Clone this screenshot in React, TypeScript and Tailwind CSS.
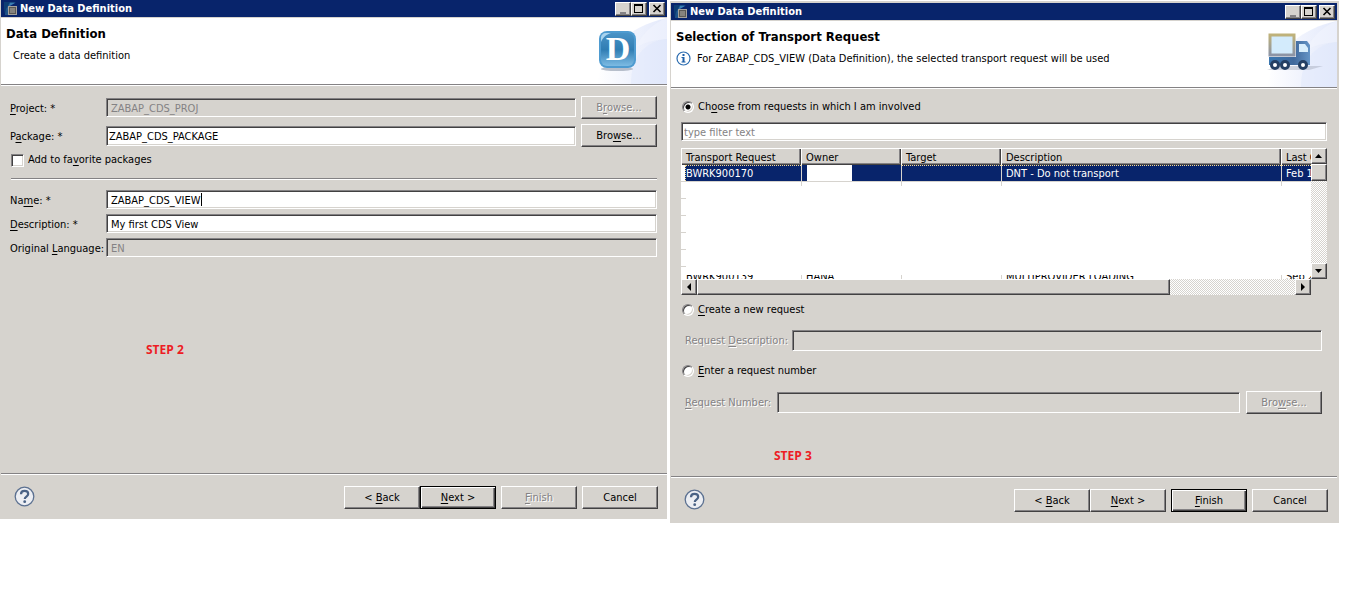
import { useState } from "react";
import type { ReactNode } from "react";

const SUNKEN =
  "border border-t-[#848284] border-l-[#848284] border-b-white border-r-white shadow-[inset_1px_1px_0_#424142,inset_-1px_-1px_0_#d6d3ce]";
const RAISED =
  "border border-t-white border-l-white border-b-[#424142] border-r-[#424142] bg-[#d6d3ce] shadow-[inset_-1px_-1px_0_#848284]";
const DITHER = "bg-[repeating-conic-gradient(#fff_0_25%,#d6d3ce_0_50%)] bg-[length:2px_2px]";
const DISABLED = "text-[#848284] [text-shadow:1px_1px_0_#fff]";
const SELECTED =
  "h-4 border-t border-l border-t-[#f7db94] border-l-[#d6d3ce] [border-top-style:dotted] bg-[#08246b] pl-1 leading-4";

// "&" goes before the letter that is the keyboard mnemonic
function Mnemonic({ text }: { text: string }) {
  const i = text.indexOf("&");
  if (i < 0) return <span>{text}</span>;
  return (
    <span>
      {text.slice(0, i)}
      <span className="underline underline-offset-2">{text[i + 1]}</span>
      {text.slice(i + 2)}
    </span>
  );
}

interface ButtonProps {
  text: string;
  disabled?: boolean;
  primary?: boolean;
}

function PushButton({ text, disabled, primary }: ButtonProps) {
  const frame = primary
    ? "border border-black bg-[#d6d3ce] shadow-[inset_1px_1px_0_#fff,inset_-1px_-1px_0_#424142,inset_-2px_-2px_0_#848284]"
    : RAISED;
  return (
    <button type="button" disabled={disabled} className={`h-[23px] w-[76px] shrink-0 ${frame} ${disabled ? DISABLED : ""}`}>
      <Mnemonic text={text} />
    </button>
  );
}

interface FieldProps {
  id: string;
  value?: string;
  disabled?: boolean;
  caret?: boolean;
  className?: string;
}

function Field({ id, value = "", disabled, caret, className = "h-[19px] pl-1" }: FieldProps) {
  const [text, setText] = useState<string>(value);
  return (
    <div className={`flex min-w-0 flex-1 items-center ${SUNKEN} ${disabled ? "bg-[#d6d3ce]" : "bg-white"} ${className}`}>
      <input
        id={id}
        type="text"
        value={text}
        disabled={disabled}
        onChange={(e) => setText(e.target.value)}
        className={`h-4 bg-transparent pt-0.5 outline-none disabled:text-[#848284] ${caret ? "[field-sizing:content]" : "w-full"}`}
      />
      {caret && <span className="h-[13px] w-px bg-black" />}
    </div>
  );
}

function TitleBar() {
  return (
    <div className="flex h-[17px] items-center bg-[#08246b] pr-0.5 pl-[3px] text-white">
      <svg width="14" height="14" viewBox="0 0 14 14" aria-hidden="true">
        <path d="M0 0h12L5 4v9L1 13z" fill="#1d5288" />
        <path d="M0 0h6L2 7l-1 5z" fill="#0c3d73" />
        <path d="M6 1h5L4 5l-1 4z" fill="#3b7fb5" />
        <rect x="4" y="4" width="9" height="9" fill="#a5a29d" />
        <rect x="5" y="5" width="7" height="7" fill="#5a5955" />
        <rect x="6" y="6" width="5" height="5" fill="#85837e" />
      </svg>
      <span className="ml-0.5 flex-1 font-bold">New Data Definition</span>
      <button type="button" aria-label="Minimize" className={`h-[14px] w-4 ${RAISED}`}>
        <svg width="14" height="12" viewBox="0 0 14 12"><path d="M4 9h6v2H4z" fill="#848284" /></svg>
      </button>
      <button type="button" aria-label="Maximize" className={`h-[14px] w-4 ${RAISED}`}>
        <svg width="14" height="12" viewBox="0 0 14 12"><path d="M2 1h9v9H2zM3 3v6h7V3z" fill="#000" fillRule="evenodd" /></svg>
      </button>
      <button type="button" aria-label="Close" className={`ml-0.5 h-[14px] w-4 ${RAISED}`}>
        <svg width="14" height="12" viewBox="0 0 14 12"><path d="M3.500 2l7 7M10.500 2l-7 7" stroke="#000" strokeWidth="1.600" /></svg>
      </button>
    </div>
  );
}

function Swoosh({ id }: { id: string }) {
  return (
    <>
      <defs>
        <linearGradient id={`${id}-sky`} x1="0" y1="0" x2="1" y2="0">
          <stop offset="0" stopColor="#fff" />
          <stop offset="0.500" stopColor="#f0f3fd" />
          <stop offset="1" stopColor="#e3e9fb" />
        </linearGradient>
      </defs>
      <path d="M0 66C4 36 30 8 70 0V66z" fill={`url(#${id}-sky)`} />
      <path d="M34 66C34 40 46 24 70 21V66z" fill="#dfe7fb" fillOpacity="0.500" />
      <path d="M38 30C46 14 58 4 70 0V21C56 22 46 25 38 30z" fill="#f3f6fe" fillOpacity="0.500" />
    </>
  );
}

function DataDefinitionBanner() {
  return (
    <svg width="70" height="66" viewBox="0 0 70 66" aria-hidden="true">
      <Swoosh id="dd" />
      <defs>
        <linearGradient id="dd-face" x1="0" y1="0" x2="0" y2="1">
          <stop offset="0" stopColor="#4a93c6" />
          <stop offset="0.500" stopColor="#2f7db3" />
          <stop offset="1" stopColor="#7dbbe3" />
        </linearGradient>
      </defs>
      <ellipse cx="20" cy="51" rx="16" ry="2" fill="#8c97a8" fillOpacity="0.600" />
      <rect x="2" y="13" width="37" height="37" rx="8" fill="#4e9bd0" />
      <rect x="4" y="15" width="33" height="33" rx="6" fill="url(#dd-face)" />
      <path d="M4 20c0-3 2-5 5-5h5c-4 1-8 4-10 9z" fill="#a9d4ef" />
      <text x="21" y="42" textAnchor="middle" fontSize="34" fontWeight="bold" fill="#fff" fontFamily="'Liberation Serif', serif">D</text>
    </svg>
  );
}

function TransportBanner() {
  return (
    <svg width="70" height="66" viewBox="0 0 70 66" aria-hidden="true">
      <Swoosh id="tr" />
      <defs>
        <linearGradient id="tr-frame" x1="0" y1="0" x2="0" y2="1">
          <stop offset="0" stopColor="#bfb27a" />
          <stop offset="1" stopColor="#8c94a6" />
        </linearGradient>
        <linearGradient id="tr-body" x1="0" y1="0" x2="1" y2="0">
          <stop offset="0" stopColor="#3b77b0" />
          <stop offset="0.600" stopColor="#41699c" />
          <stop offset="1" stopColor="#6594c6" />
        </linearGradient>
      </defs>
      <path d="M0 49l12-4h44l-14 4z" fill="#aab0c0" fillOpacity="0.500" />
      <rect x="3" y="14" width="24" height="20" fill="#d3ebfc" stroke="url(#tr-frame)" strokeWidth="3" />
      <path d="M2 36h27V20h11l3 4v20H2z" fill="url(#tr-body)" />
      <path d="M32 23h6l3 4v4h-9z" fill="#d9eefc" />
      <g fill="#fff" stroke="#243f63" strokeWidth="3">
        <circle cx="8" cy="44" r="3.500" />
        <circle cx="18" cy="44" r="3.500" />
        <circle cx="36" cy="44" r="3.500" />
      </g>
    </svg>
  );
}

interface DialogProps {
  title: string;
  message: ReactNode;
  banner: ReactNode;
  footer: ReactNode;
  children: ReactNode;
}

function Dialog({ title, message, banner, footer, children }: DialogProps) {
  return (
    <>
      <TitleBar />
      <header className="mt-px flex h-[68px] justify-between border-b border-white bg-white">
        <div className="flex flex-1 flex-col border-b border-[#848284] pt-2 pl-[5px]">
          <h1 className="text-[13px] leading-4 font-bold">{title}</h1>
          {message}
        </div>
        <div className="border-b border-[#848284]">{banner}</div>
      </header>
      <main className="h-[387px]">{children}</main>
      <footer className="flex h-[46px] items-start border-t border-[#848284] pr-[9px] pl-[13px] shadow-[inset_0_1px_0_#fff]">
        <button type="button" aria-label="Help" className="mt-3 mr-auto">
          <svg width="21" height="21" viewBox="0 0 21 21">
            <circle cx="10.500" cy="10.500" r="9.300" fill="#eceef3" stroke="#5c7191" strokeWidth="1.300" />
            <path d="M7 8.200C7 3.800 14.200 4 14.200 8c0 2.600-3.400 2.700-3.400 5" fill="none" stroke="#4a6285" strokeWidth="2.200" />
            <circle cx="10.700" cy="15.700" r="1.400" fill="#4a6285" />
          </svg>
        </button>
        <div className="flex gap-[5px] pt-3">{footer}</div>
      </footer>
    </>
  );
}

function StepTwo() {
  return (
    <Dialog
      title="Data Definition"
      message={<p className="mt-[7px] ml-[7px]">Create a data definition</p>}
      banner={<DataDefinitionBanner />}
      footer={
        <>
          <div className="flex">
            <PushButton text="< &Back" />
            <PushButton text="&Next >" primary />
          </div>
          <PushButton text="&Finish" disabled />
          <PushButton text="Cancel" />
        </>
      }
    >
      <form className="pr-[10px] pl-[9px] pt-[10px]">
        <div className="grid grid-cols-[96px_minmax(0,1fr)] items-center gap-y-[5px]">
          <label htmlFor="project" className="pt-0.5"><Mnemonic text="&Project: *" /></label>
          <div className="flex items-center gap-[5px]">
            <Field id="project" value="ZABAP_CDS_PROJ" disabled />
            <PushButton text="B&rowse..." disabled />
          </div>
          <label htmlFor="package" className="pt-0.5"><Mnemonic text="P&ackage: *" /></label>
          <div className="flex items-center gap-[5px]">
            <Field id="package" value="ZABAP_CDS_PACKAGE" className="h-5 pl-0.5" />
            <PushButton text="Bro&wse..." />
          </div>
        </div>
        <label className="mt-1.5 ml-px flex items-center gap-1">
          <input type="checkbox" className={`h-[13px] w-[13px] appearance-none bg-white checked:bg-black ${SUNKEN}`} />
          <Mnemonic text="Add to fa&vorite packages" />
        </label>
        <hr className="mt-[11px] ml-px h-0.5 border-t border-b border-t-[#848284] border-b-white" />
        <div className="mt-[10px] grid grid-cols-[96px_minmax(0,1fr)] items-center gap-y-[5px] whitespace-nowrap">
          <label htmlFor="name" className="pt-0.5"><Mnemonic text="Na&me: *" /></label>
          <Field id="name" value="ZABAP_CDS_VIEW" caret />
          <label htmlFor="description" className="pt-0.5"><Mnemonic text="&Description: *" /></label>
          <Field id="description" value="My first CDS View" />
          <label htmlFor="language" className="pt-0.5"><Mnemonic text="Original &Language:" /></label>
          <Field id="language" value="EN" disabled />
        </div>
      </form>
      <p className="mt-[85px] ml-[145px] font-['Open_Sans',sans-serif] text-[12px] leading-4 font-bold text-[#ed1c24]">STEP 2</p>
    </Dialog>
  );
}

interface ScrollButtonProps {
  label: string;
  d: string;
}

function ScrollButton({ label, d }: ScrollButtonProps) {
  return (
    <button type="button" aria-label={label} className={`flex h-4 w-4 shrink-0 items-center justify-center ${RAISED}`}>
      <svg width="8" height="8" viewBox="0 0 8 8"><path d={d} fill="#000" /></svg>
    </button>
  );
}

const HEADERS = ["Transport Request", "Owner", "Target", "Description", "Last Changed"];

function RequestTable() {
  return (
    <div className="grid grid-cols-[minmax(0,1fr)_16px] overflow-hidden">
      <div className="h-[131px] overflow-hidden bg-white">
        <table className="w-full table-fixed border-collapse whitespace-nowrap">
          <colgroup>
            <col className="w-[120px]" />
            <col className="w-[100px]" />
            <col className="w-[100px]" />
            <col />
            <col className="w-[30px]" />
          </colgroup>
          <thead>
            <tr>
              {HEADERS.map((h) => (
                <th
                  key={h}
                  className="h-[17px] overflow-hidden bg-[#d6d3ce] p-0 pt-0.5 pl-[5px] text-left font-normal shadow-[inset_0_1px_0_#fff,inset_1px_0_0_#fff,inset_-1px_-1px_0_#424142,inset_-2px_-2px_0_#848284] last:shadow-[inset_0_1px_0_#fff,inset_1px_0_0_#fff,inset_0_-1px_0_#424142,inset_0_-2px_0_#848284]"
                >
                  {h}
                </th>
              ))}
            </tr>
          </thead>
          <tbody>
            <tr className="text-white">
              <td className="h-[17px] p-0">
                <div className="ml-1 h-4 border-t border-l border-dotted border-[#f7db94] bg-[#08246b] leading-4">BWRK900170</div>
                <div className="h-px bg-[#d6d3ce]" />
              </td>
              <td className="p-0">
                <div className="h-4 border-l border-[#d6d3ce] bg-[#08246b] pl-[5px]">
                  <div className="h-full w-[45px] bg-white" />
                </div>
                <div className="h-px bg-[#d6d3ce]" />
              </td>
              <td className="p-0">
                <div className={SELECTED} />
                <div className="h-px bg-[#d6d3ce]" />
              </td>
              <td className="p-0">
                <div className={SELECTED}>DNT - Do not transport</div>
                <div className="h-px bg-[#d6d3ce]" />
              </td>
              <td className="overflow-hidden p-0">
                <div className={SELECTED}>Feb 12</div>
                <div className="h-px bg-[#d6d3ce]" />
              </td>
            </tr>
            {[0, 1, 2, 3, 4].map((row) => (
              <tr key={row}>
                {HEADERS.map((h, col) => (
                  <td key={h} className="h-[17px] p-0">
                    {row === 0 && col > 0 && <div className="mb-[13px] h-1 w-px bg-[#d6d3ce]" />}
                    {col === 0 && <div className="mt-4 h-px w-[5px] bg-[#d6d3ce]" />}
                  </td>
                ))}
              </tr>
            ))}
            <tr>
              <td colSpan={5} className="h-2 p-0" />
            </tr>
            <tr>
              {["BWRK900139", "HANA", "", "MULTIPROVIDER LOADING", "Sep 2"].map((text, col) => (
                <td key={col} className="p-0">
                  <div className={`h-1 overflow-hidden pl-1 leading-1 ${col > 0 ? "border-l border-[#d6d3ce]" : "ml-px"}`}>{text}</div>
                </td>
              ))}
            </tr>
          </tbody>
        </table>
      </div>
      <div className={`flex flex-col ${DITHER}`}>
        <ScrollButton label="Scroll up" d="M0 6h7L3.500 2z" />
        <div className={`h-[17px] ${RAISED}`} />
        <div className="flex-1" />
        <ScrollButton label="Scroll down" d="M0 2h7L3.500 6z" />
      </div>
      <div className={`flex ${DITHER}`}>
        <ScrollButton label="Scroll left" d="M6 0v8L2 4z" />
        <div className={`w-3/4 ${RAISED}`} />
        <div className="flex-1" />
        <ScrollButton label="Scroll right" d="M2 0v8l4-4z" />
      </div>
    </div>
  );
}

interface ChoiceProps {
  value: string;
  text: string;
  choice: string;
  onChoose: (value: string) => void;
}

function Choice({ value, text, choice, onChoose }: ChoiceProps) {
  return (
    <label className="ml-px flex h-[14px] items-center gap-1">
      <input
        type="radio"
        name="request-choice"
        value={value}
        checked={choice === value}
        onChange={() => onChoose(value)}
        className="h-3 w-3 appearance-none rounded-full border border-t-[#848284] border-r-white border-b-white border-l-[#848284] bg-white shadow-[inset_1px_1px_0_#424142,inset_-1px_-1px_0_#d6d3ce] checked:bg-[radial-gradient(circle,#000_2px,#fff_3px)]"
      />
      <Mnemonic text={text} />
    </label>
  );
}

function StepThree() {
  const [choice, setChoice] = useState<string>("involved");

  return (
    <Dialog
      title="Selection of Transport Request"
      message={
        <p className="mt-1.5 flex items-center gap-1.5">
          <svg width="15" height="15" viewBox="0 0 15 15" aria-hidden="true">
            <circle cx="7.500" cy="7.500" r="6.500" fill="#fff" stroke="#2b6cb0" strokeWidth="1.200" />
            <path d="M6.500 3h2v2h-2zM5.500 6h3v4.500h1v1h-4v-1h1V7h-1z" fill="#1d5fa8" />
          </svg>
          For ZABAP_CDS_VIEW (Data Definition), the selected transport request will be used
        </p>
      }
      banner={<TransportBanner />}
      footer={
        <>
          <div className="flex">
            <PushButton text="< &Back" />
            <PushButton text="&Next >" />
          </div>
          <PushButton text="&Finish" primary />
          <PushButton text="Cancel" />
        </>
      }
    >
      <form className="px-[10px] pt-[11px]">
        <Choice value="involved" text="Ch&oose from requests in which I am involved" choice={choice} onChoose={setChoice} />
        <input
          type="text"
          aria-label="Filter"
          placeholder="type filter text"
          className={`mt-2 mb-[7px] block h-[19px] w-full bg-white px-0.5 pt-0.5 outline-none placeholder:text-[#848284] ${SUNKEN}`}
        />
        <RequestTable />
        <div className="mt-2">
          <Choice value="new" text="&Create a new request" choice={choice} onChoose={setChoice} />
        </div>
        <div className="mt-[13px] flex items-center gap-1 pr-[5px] pl-1">
          <label htmlFor="request-description" className={DISABLED}><Mnemonic text="Request &Description:" /></label>
          <Field id="request-description" disabled className="h-[21px] pl-1" />
        </div>
        <div className="mt-[13px]">
          <Choice value="number" text="&Enter a request number" choice={choice} onChoose={setChoice} />
        </div>
        <div className="mt-[13px] flex items-center gap-1.5 pr-[5px] pl-1">
          <label htmlFor="request-number" className={DISABLED}><Mnemonic text="&Request Number:" /></label>
          <Field id="request-number" disabled className="h-[21px] pl-1" />
          <PushButton text="Bro&wse..." disabled />
        </div>
      </form>
      <p className="mt-[34px] ml-[103px] font-['Open_Sans',sans-serif] text-[12px] leading-4 font-bold text-[#ed1c24]">STEP 3</p>
    </Dialog>
  );
}

export default function App() {
  return (
    <div className="grid min-h-screen grid-cols-[667fr_669fr] items-start gap-[3px] bg-white pr-[21px] font-['DejaVu_Sans_Condensed','Noto_Sans',sans-serif] text-[11px] leading-[14px] text-black">
      <section className="border-l border-[#d6d3ce] bg-[#d6d3ce]">
        <StepTwo />
      </section>
      <section className="mt-px border-t-2 border-r-2 border-b border-l border-[#d6d3ce] bg-[#d6d3ce]">
        <StepThree />
      </section>
    </div>
  );
}
